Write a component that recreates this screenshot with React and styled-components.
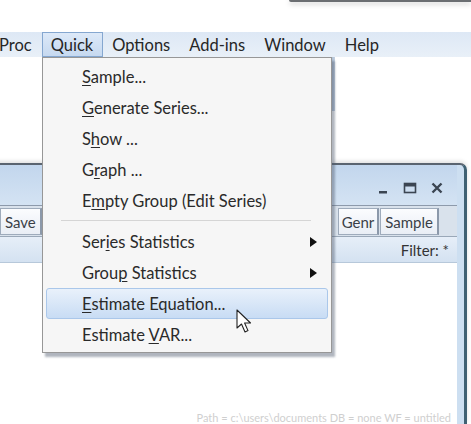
import styled, { createGlobalStyle } from "styled-components";

const Global = createGlobalStyle`
  html, body {
    margin: 0;
    padding: 0;
    background: #ffffff;
  }
  body {
    font-family: "Lato", "Open Sans", sans-serif;
    color: #2b2b2b;
  }
`;

const Page = styled.div`
  position: relative;
  width: 471px;
  height: 424px;
  overflow: hidden;
  background: #ffffff;
  display: flex;
  flex-direction: column;
`;

const TopStrip = styled.div`
  height: 32px;
  display: flex;
  justify-content: flex-end;
`;

const DialogEdge = styled.div`
  width: 182px;
  height: 2px;
  background: #6b6e72;
  box-shadow: 0 2px 5px rgba(0, 0, 0, 0.25);
  border-bottom-left-radius: 3px;
`;

const MenuBar = styled.div`
  height: 25px;
  display: flex;
  align-items: stretch;
  background: linear-gradient(#dde8f5, #e9f0f8);
  font-size: 16.5px;
`;

const BarItem = styled.div`
  display: flex;
  align-items: center;
  padding: 0 9px 0 8px;
  margin-left: ${({ $shift }) => $shift || 0}px;
  box-sizing: border-box;
  border: 1px solid ${({ $open }) => ($open ? "#85a7d0" : "transparent")};
  background: ${({ $open }) =>
    $open ? "linear-gradient(#dde9f8, #c6d9f0)" : "transparent"};
  color: #262626;
`;

const Workspace = styled.div`
  position: relative;
  flex: 1;
  display: flex;
  flex-direction: column;
  padding-top: 106px;
`;

const BackScroll = styled.div`
  position: absolute;
  left: 330px;
  top: 0;
  width: 5px;
  height: 54px;
  background: linear-gradient(90deg, #9fb2c9, #c4d2e2);
`;

const Win = styled.div`
  flex: 1;
  margin-right: 4px;
  margin-left: -10px;
  display: flex;
  flex-direction: column;
  background: #cddff1;
  border-top: 2px solid #5a6470;
  border-right: 3px solid #3f6173;
  border-top-right-radius: 7px;
  box-shadow: 0 -2px 4px rgba(0, 0, 0, 0.12);
  padding-right: 7px;
`;

const TitleBar = styled.div`
  height: 40px;
  display: flex;
  justify-content: flex-end;
  align-items: center;
  gap: 13px;
  padding: 6px 13px 0 0;
  box-sizing: border-box;
  background: linear-gradient(#c2d6ed, #d4e3f3);
`;

const CapIcon = styled.svg`
  width: 14px;
  height: 14px;
  display: block;
`;

const ToolBar = styled.div`
  height: 32px;
  display: flex;
  justify-content: space-between;
  align-items: stretch;
  padding: 2px 18px 1px 10px;
  box-sizing: border-box;
  background: #d9e2ec;
  border-top: 1px solid #8d9aab;
  border-bottom: 1px solid #9aa8b8;
`;

const ButtonGroup = styled.div`
  display: flex;
  gap: 1px;
`;

const ToolButton = styled.div`
  display: flex;
  align-items: center;
  padding: 0 ${({ $pad }) => $pad || 4}px;
  font-size: 15px;
  color: #3a3f47;
  background: linear-gradient(#fbfcfe, #e9eef5);
  border: 1px solid #9eabbb;
  border-right: 2px solid #8c99aa;
`;

const FilterRow = styled.div`
  height: 25px;
  display: flex;
  justify-content: flex-end;
  align-items: center;
  padding-right: 8px;
  font-size: 15px;
  color: #333;
  background: linear-gradient(#e6eef8, #d4e2f1);
  border-bottom: 1px solid #b7c8da;
`;

const Content = styled.div`
  flex: 1;
  background: #ffffff;
  display: flex;
  align-items: flex-end;
  justify-content: flex-end;
  overflow: hidden;
`;

const StatusText = styled.div`
  font-size: 11px;
  line-height: 13px;
  color: #cfcfcf;
  white-space: nowrap;
  margin: 0 6px 0 0;
`;

const Dropdown = styled.div`
  position: absolute;
  left: 42px;
  top: 57px;
  width: 290px;
  box-sizing: border-box;
  padding: 3px 2px 2px;
  background: #f6f6f6;
  border: 1px solid #979797;
  box-shadow: 3px 4px 2px rgba(80, 90, 110, 0.45);
  font-size: 16.5px;
  color: #2a2a2a;
`;

const MenuItem = styled.div`
  position: relative;
  height: 31px;
  display: flex;
  align-items: center;
  padding-left: 35px;
  box-sizing: border-box;
  border: 1px solid ${({ $hot }) => ($hot ? "#aac7ea" : "transparent")};
  border-radius: 3px;
  background: ${({ $hot }) =>
    $hot ? "linear-gradient(#e9f1fb, #c8dcf4)" : "transparent"};
  margin: 0 1px;
`;

const Label = styled.span`
  white-space: pre;
`;

const Key = styled.span`
  text-decoration: underline;
  text-underline-offset: 2px;
`;

const Arrow = styled.span`
  position: absolute;
  right: 10px;
  top: 50%;
  margin-top: -5px;
  width: 0;
  height: 0;
  border-top: 5px solid transparent;
  border-bottom: 5px solid transparent;
  border-left: 7px solid #111;
`;

const Separator = styled.div`
  height: 1px;
  margin: 4px 18px 5px 16px;
  background: #d5d5d5;
`;

const Cursor = styled.svg`
  position: absolute;
  left: 236px;
  top: 309px;
  width: 17px;
  height: 25px;
`;

const items = [
  { pre: "", key: "S", post: "ample..." },
  { pre: "", key: "G", post: "enerate Series..." },
  { pre: "S", key: "h", post: "ow ..." },
  { pre: "G", key: "r", post: "aph ..." },
  { pre: "E", key: "m", post: "pty Group (Edit Series)" },
];

const items2 = [
  { pre: "Ser", key: "i", post: "es Statistics", sub: true },
  { pre: "Grou", key: "p", post: " Statistics", sub: true },
  { pre: "", key: "E", post: "stimate Equation...", hot: true },
  { pre: "Estimate ", key: "V", post: "AR..." },
];

const Item = ({ it }) => (
  <MenuItem $hot={it.hot}>
    <Label>
      {it.pre}
      <Key>{it.key}</Key>
      {it.post}
    </Label>
    {it.sub && <Arrow />}
  </MenuItem>
);

export default function App() {
  return (
    <Page>
      <Global />
      <TopStrip>
        <DialogEdge />
      </TopStrip>
      <MenuBar>
        <BarItem $shift={-10}>Proc</BarItem>
        <BarItem $open>Quick</BarItem>
        <BarItem>Options</BarItem>
        <BarItem>Add-ins</BarItem>
        <BarItem>Window</BarItem>
        <BarItem>Help</BarItem>
      </MenuBar>
      <Workspace>
        <BackScroll />
        <Win>
          <TitleBar>
            <CapIcon viewBox="0 0 14 14">
              <rect x="3" y="10" width="8" height="2.5" fill="#3b4552" />
            </CapIcon>
            <CapIcon viewBox="0 0 14 14">
              <rect x="1.5" y="2.5" width="11" height="9" fill="none" stroke="#3b4552" strokeWidth="1.6" />
              <rect x="1.5" y="2.5" width="11" height="3" fill="#3b4552" />
            </CapIcon>
            <CapIcon viewBox="0 0 14 14">
              <path d="M2.5 2.5 L11.5 11.5 M11.5 2.5 L2.5 11.5" stroke="#3b4552" strokeWidth="2.4" />
            </CapIcon>
          </TitleBar>
          <ToolBar>
            <ButtonGroup>
              <ToolButton>Save</ToolButton>
            </ButtonGroup>
            <ButtonGroup>
              <ToolButton $pad={3}>Genr</ToolButton>
              <ToolButton>Sample</ToolButton>
            </ButtonGroup>
          </ToolBar>
          <FilterRow>Filter: *</FilterRow>
          <Content>
            <StatusText>Path = c:\users\documents   DB = none   WF = untitled</StatusText>
          </Content>
        </Win>
      </Workspace>
      <Dropdown>
        {items.map((it, i) => (
          <Item key={i} it={it} />
        ))}
        <Separator />
        {items2.map((it, i) => (
          <Item key={i} it={it} />
        ))}
      </Dropdown>
      <Cursor viewBox="0 0 17 25">
        <path
          d="M1 1 L1 19 L5.5 15 L9 23 L12 21.6 L8.6 14 L14.5 14 Z"
          fill="#ffffff"
          stroke="#222"
          strokeWidth="1.1"
          strokeLinejoin="round"
        />
      </Cursor>
    </Page>
  );
}
